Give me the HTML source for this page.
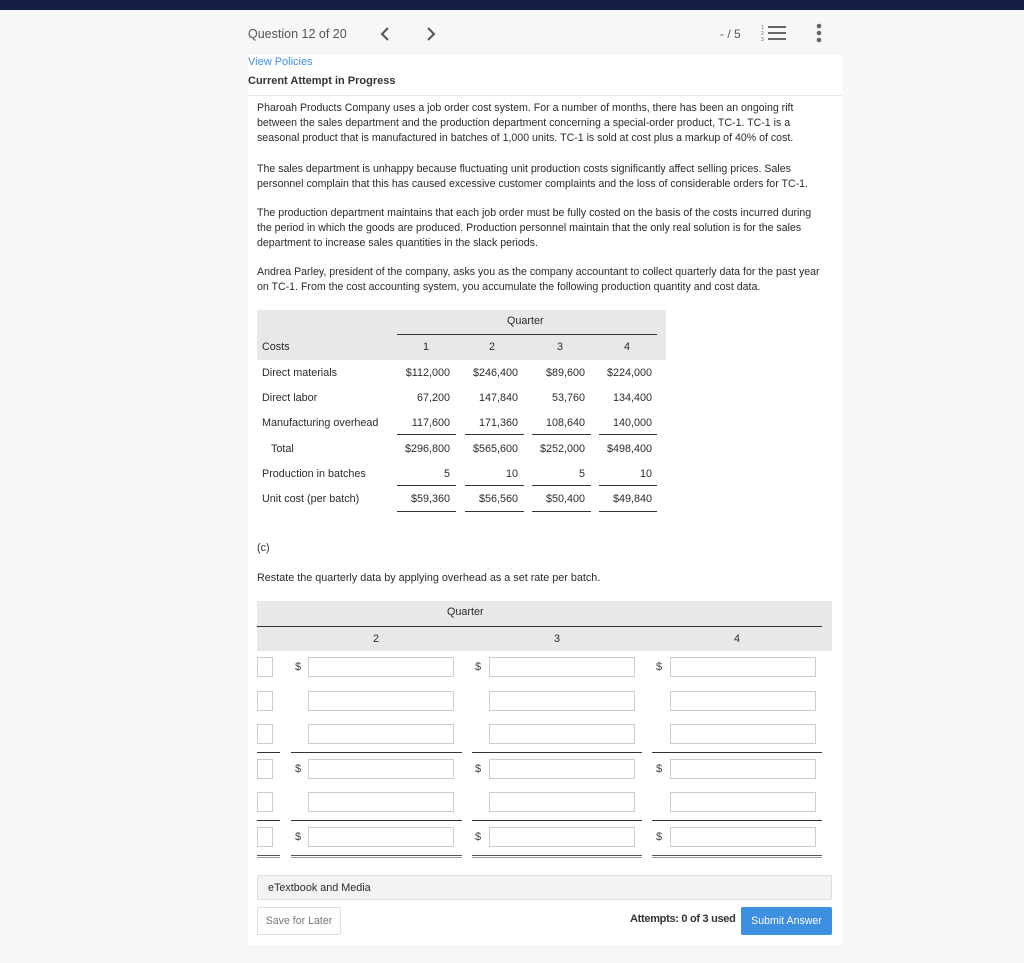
<!DOCTYPE html>
<html><head><meta charset="utf-8"><style>
*{margin:0;padding:0;box-sizing:border-box}
body{width:1024px;height:963px;background:#f7f7f7;font-family:"Liberation Sans",sans-serif;color:#333;position:relative;overflow:hidden}
.a{position:absolute;white-space:nowrap}
.bar{left:0;top:0;width:1024px;height:10px;background:#151f45}
.card{left:248px;top:55px;width:594px;height:890px;background:#fff}
.p{font-size:10.6px;line-height:15px;left:257px;color:#2b2b2b}
.g{background:#e8e8e8}
.t{font-size:10.8px;color:#2b2b2b}
.r{text-align:right}
.hl{height:1px;background:#333}
.inp{position:absolute;border:1px solid #ccc;background:#fff;height:20px}
.dol{position:absolute;font-size:11px;color:#444}
</style></head><body>
<div class="a bar"></div>
<div class="a" style="left:248px;top:27px;font-size:12.5px;color:#555">Question 12 of 20</div>
<svg class="a" style="left:378px;top:25px" width="60" height="18"><path d="M10 3 L4 9 L10 15" stroke="#555" stroke-width="2" fill="none"/><path d="M50 3 L56 9 L50 15" stroke="#555" stroke-width="2" fill="none"/></svg>
<div class="a" style="left:720px;top:27px;font-size:12px;color:#555">- / 5</div>
<svg class="a" style="left:760px;top:23px" width="30" height="20"><text x="1" y="6" font-size="5" fill="#666">1</text><text x="1" y="12" font-size="5" fill="#666">2</text><text x="1" y="18" font-size="5" fill="#666">3</text><rect x="8" y="3" width="18" height="2" fill="#666"/><rect x="8" y="9" width="18" height="2" fill="#666"/><rect x="8" y="15" width="18" height="2" fill="#666"/></svg>
<svg class="a" style="left:815px;top:23px" width="10" height="22"><circle cx="4" cy="3" r="2.3" fill="#666"/><circle cx="4" cy="10" r="2.3" fill="#666"/><circle cx="4" cy="17" r="2.3" fill="#666"/></svg>
<div class="a card"></div>
<div class="a" style="left:248px;top:56px;font-size:11px;color:#3d8fe0">View Policies</div>
<div class="a" style="left:248px;top:75px;font-size:11px;font-weight:bold;color:#333">Current Attempt in Progress</div>
<div class="a" style="left:248px;top:95px;width:594px;height:1px;background:#e6e6e6"></div>
<div class="a p" style="top:101px">Pharoah Products Company uses a job order cost system. For a number of months, there has been an ongoing rift<br>between the sales department and the production department concerning a special-order product, TC-1. TC-1 is a<br>seasonal product that is manufactured in batches of 1,000 units. TC-1 is sold at cost plus a markup of 40% of cost.</div>
<div class="a p" style="top:162px">The sales department is unhappy because fluctuating unit production costs significantly affect selling prices. Sales<br>personnel complain that this has caused excessive customer complaints and the loss of considerable orders for TC-1.</div>
<div class="a p" style="top:206px">The production department maintains that each job order must be fully costed on the basis of the costs incurred during<br>the period in which the goods are produced. Production personnel maintain that the only real solution is for the sales<br>department to increase sales quantities in the slack periods.</div>
<div class="a p" style="top:265px">Andrea Parley, president of the company, asks you as the company accountant to collect quarterly data for the past year<br>on TC-1. From the cost accounting system, you accumulate the following production quantity and cost data.</div>

<div class="a g" style="left:257px;top:310px;width:409px;height:50px"></div>
<div class="a t" style="left:507px;top:315px">Quarter</div>
<div class="a hl" style="left:397px;top:334px;width:260px"></div>
<div class="a t" style="left:262px;top:341px">Costs</div>
<div class="a t" style="left:423px;top:341px">1</div><div class="a t" style="left:489px;top:341px">2</div><div class="a t" style="left:557px;top:341px">3</div><div class="a t" style="left:624px;top:341px">4</div>
<div class="a t" style="left:262px;top:361px;line-height:25.2px;white-space:normal">Direct materials<br>Direct labor<br>Manufacturing overhead<br>&nbsp;&nbsp;&nbsp;Total<br>Production in batches<br>Unit cost (per batch)</div>
<div class="a t r" style="left:380px;width:70px;top:361px;line-height:25.2px">$112,000<br>67,200<br>117,600<br>$296,800<br>5<br>$59,360</div>
<div class="a t r" style="left:448px;width:70px;top:361px;line-height:25.2px">$246,400<br>147,840<br>171,360<br>$565,600<br>10<br>$56,560</div>
<div class="a t r" style="left:515px;width:70px;top:361px;line-height:25.2px">$89,600<br>53,760<br>108,640<br>$252,000<br>5<br>$50,400</div>
<div class="a t r" style="left:582px;width:70px;top:361px;line-height:25.2px">$224,000<br>134,400<br>140,000<br>$498,400<br>10<br>$49,840</div>
<div class="a hl" style="left:397px;top:434px;width:59px"></div><div class="a hl" style="left:465px;top:434px;width:59px"></div><div class="a hl" style="left:532px;top:434px;width:59px"></div><div class="a hl" style="left:599px;top:434px;width:58px"></div>
<div class="a hl" style="left:397px;top:485px;width:59px"></div><div class="a hl" style="left:465px;top:485px;width:59px"></div><div class="a hl" style="left:532px;top:485px;width:59px"></div><div class="a hl" style="left:599px;top:485px;width:58px"></div>
<div class="a hl" style="left:397px;top:511px;width:59px"></div><div class="a hl" style="left:465px;top:511px;width:59px"></div><div class="a hl" style="left:532px;top:511px;width:59px"></div><div class="a hl" style="left:599px;top:511px;width:58px"></div>

<div class="a t" style="left:257px;top:542px">(c)</div>
<div class="a t" style="left:257px;top:572px">Restate the quarterly data by applying overhead as a set rate per batch.</div>

<div class="a g" style="left:257px;top:601px;width:575px;height:50px"></div>
<div class="a t" style="left:447px;top:606px">Quarter</div>
<div class="a hl" style="left:257px;top:626px;width:565px"></div>
<div class="a t" style="left:373px;top:633px">2</div><div class="a t" style="left:554px;top:633px">3</div><div class="a t" style="left:734px;top:633px">4</div>

<div class="inp" style="left:257px;top:657px;width:16px"></div><div class="inp" style="left:257px;top:691px;width:16px"></div><div class="inp" style="left:257px;top:724px;width:16px"></div><div class="inp" style="left:257px;top:759px;width:16px"></div><div class="inp" style="left:257px;top:792px;width:16px"></div><div class="inp" style="left:257px;top:827px;width:16px"></div>

<div class="inp" style="left:308px;top:657px;width:146px"></div><div class="inp" style="left:308px;top:691px;width:146px"></div><div class="inp" style="left:308px;top:724px;width:146px"></div><div class="inp" style="left:308px;top:759px;width:146px"></div><div class="inp" style="left:308px;top:792px;width:146px"></div><div class="inp" style="left:308px;top:827px;width:146px"></div>
<div class="inp" style="left:489px;top:657px;width:146px"></div><div class="inp" style="left:489px;top:691px;width:146px"></div><div class="inp" style="left:489px;top:724px;width:146px"></div><div class="inp" style="left:489px;top:759px;width:146px"></div><div class="inp" style="left:489px;top:792px;width:146px"></div><div class="inp" style="left:489px;top:827px;width:146px"></div>
<div class="inp" style="left:670px;top:657px;width:146px"></div><div class="inp" style="left:670px;top:691px;width:146px"></div><div class="inp" style="left:670px;top:724px;width:146px"></div><div class="inp" style="left:670px;top:759px;width:146px"></div><div class="inp" style="left:670px;top:792px;width:146px"></div><div class="inp" style="left:670px;top:827px;width:146px"></div>

<div class="dol" style="left:295px;top:661px">$</div><div class="dol" style="left:475px;top:661px">$</div><div class="dol" style="left:656px;top:661px">$</div>
<div class="dol" style="left:295px;top:763px">$</div><div class="dol" style="left:475px;top:763px">$</div><div class="dol" style="left:656px;top:763px">$</div>
<div class="dol" style="left:295px;top:831px">$</div><div class="dol" style="left:475px;top:831px">$</div><div class="dol" style="left:656px;top:831px">$</div>

<div class="a hl" style="left:257px;top:752px;width:23px"></div><div class="a hl" style="left:291px;top:752px;width:171px"></div><div class="a hl" style="left:472px;top:752px;width:170px"></div><div class="a hl" style="left:652px;top:752px;width:170px"></div>
<div class="a hl" style="left:257px;top:820px;width:23px"></div><div class="a hl" style="left:291px;top:820px;width:171px"></div><div class="a hl" style="left:472px;top:820px;width:170px"></div><div class="a hl" style="left:652px;top:820px;width:170px"></div>
<div class="a" style="left:257px;top:855px;width:23px;height:3px;border-top:1px solid #555;border-bottom:1px solid #999"></div><div class="a" style="left:291px;top:855px;width:171px;height:3px;border-top:1px solid #555;border-bottom:1px solid #999"></div><div class="a" style="left:472px;top:855px;width:170px;height:3px;border-top:1px solid #555;border-bottom:1px solid #999"></div><div class="a" style="left:652px;top:855px;width:170px;height:3px;border-top:1px solid #555;border-bottom:1px solid #999"></div>

<div class="a" style="left:257px;top:875px;width:575px;height:25px;background:#f3f3f3;border:1px solid #ddd;border-radius:2px"></div>
<div class="a t" style="left:268px;top:882px">eTextbook and Media</div>
<div class="a" style="left:257px;top:907px;width:84px;height:28px;border:1px solid #ddd;border-radius:2px;font-size:10.6px;color:#777;text-align:center;line-height:26px">Save for Later</div>
<div class="a" style="left:630px;top:913px;font-size:11px;font-weight:bold;color:#333;letter-spacing:-0.3px">Attempts: 0 of 3 used</div>
<div class="a" style="left:741px;top:907px;width:91px;height:28px;background:#3d8fe0;border-radius:2px;font-size:10.6px;color:#fff;text-align:center;line-height:28px">Submit Answer</div>
</body></html>
